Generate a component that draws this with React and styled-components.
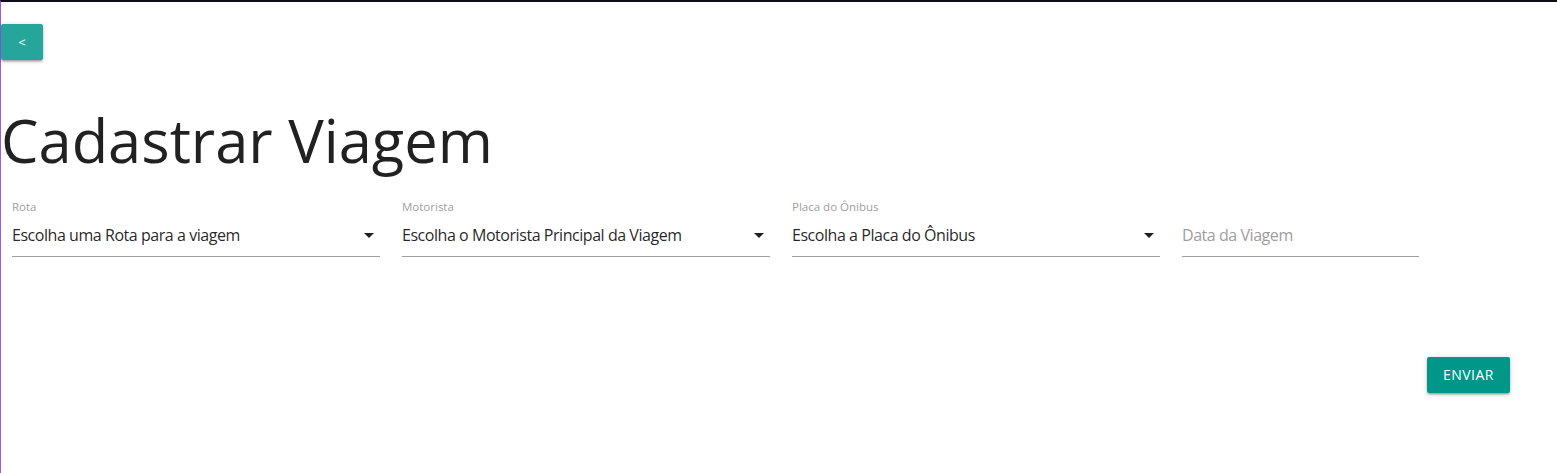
import React from "react";
import styled, { createGlobalStyle } from "styled-components";

const Global = createGlobalStyle`
  html, body { margin: 0; padding: 0; background: #fff; }
  body { font-family: "Open Sans", "Noto Sans", sans-serif; color: rgba(0,0,0,0.87); }
  * { box-sizing: border-box; }
`;

const Page = styled.div`
  min-height: 473px;
  border-top: 2px solid #0f0b1c;
  border-left: 1px solid #8f5cf5;
  padding-top: 22px;
`;

const BackButton = styled.button`
  display: block;
  height: 36px;
  width: 42px;
  border: none;
  border-radius: 2px;
  background: #26a69a;
  color: #fff;
  font-family: inherit;
  font-size: 13px;
  padding: 0;
  box-shadow: 0 2px 2px 0 rgba(0,0,0,0.14), 0 3px 1px -2px rgba(0,0,0,0.12), 0 1px 5px 0 rgba(0,0,0,0.2);
`;

const Title = styled.h3`
  margin: 47px 0 26px 0;
  font-size: 59.6px;
  font-weight: 400;
  line-height: 1.1;
  color: rgba(0,0,0,0.87);
`;

const FieldRow = styled.div`
  display: flex;
  padding-left: 11px;
  gap: 22px;
`;

const Field = styled.div`
  width: ${(p) => p.$w}px;
  display: flex;
  flex-direction: column;
`;

const Label = styled.label`
  font-size: 11.5px;
  color: #9e9e9e;
  height: 16px;
  line-height: 16px;
`;

const Select = styled.div`
  height: 42px;
  display: flex;
  align-items: center;
  justify-content: space-between;
  border-bottom: 1px solid #9e9e9e;
  font-size: 16px;
  letter-spacing: -0.45px;
  color: ${(p) => (p.$placeholder ? "#9e9e9e" : "rgba(0,0,0,0.87)")};
  padding-right: 6px;
`;

const Caret = styled.span`
  width: 0;
  height: 0;
  border-left: 5px solid transparent;
  border-right: 5px solid transparent;
  border-top: 5px solid rgba(0,0,0,0.87);
`;

const Actions = styled.div`
  display: flex;
  justify-content: flex-end;
  padding-right: 47px;
  margin-top: 100px;
`;

const SubmitButton = styled.button`
  height: 36px;
  padding: 0 16px;
  border: none;
  border-radius: 2px;
  background: #009688;
  color: #fff;
  font-family: inherit;
  font-size: 14px;
  letter-spacing: 0.5px;
  text-transform: uppercase;
  box-shadow: 0 2px 2px 0 rgba(0,0,0,0.14), 0 3px 1px -2px rgba(0,0,0,0.12), 0 1px 5px 0 rgba(0,0,0,0.2);
`;

const fields = [
  { label: "Rota", value: "Escolha uma Rota para a viagem", w: 368, select: true },
  { label: "Motorista", value: "Escolha o Motorista Principal da Viagem", w: 368, select: true },
  { label: "Placa do Ônibus", value: "Escolha a Placa do Ônibus", w: 368, select: true },
  { label: "", value: "Data da Viagem", w: 237, select: false },
];

export default function App() {
  return (
    <Page>
      <Global />
      <BackButton>&lt;</BackButton>
      <Title>Cadastrar Viagem</Title>
      <FieldRow>
        {fields.map((f) => (
          <Field key={f.value} $w={f.w}>
            <Label>{f.label}</Label>
            <Select $placeholder={!f.select}>
              <span>{f.value}</span>
              {f.select && <Caret />}
            </Select>
          </Field>
        ))}
      </FieldRow>
      <Actions>
        <SubmitButton>Enviar</SubmitButton>
      </Actions>
    </Page>
  );
}
